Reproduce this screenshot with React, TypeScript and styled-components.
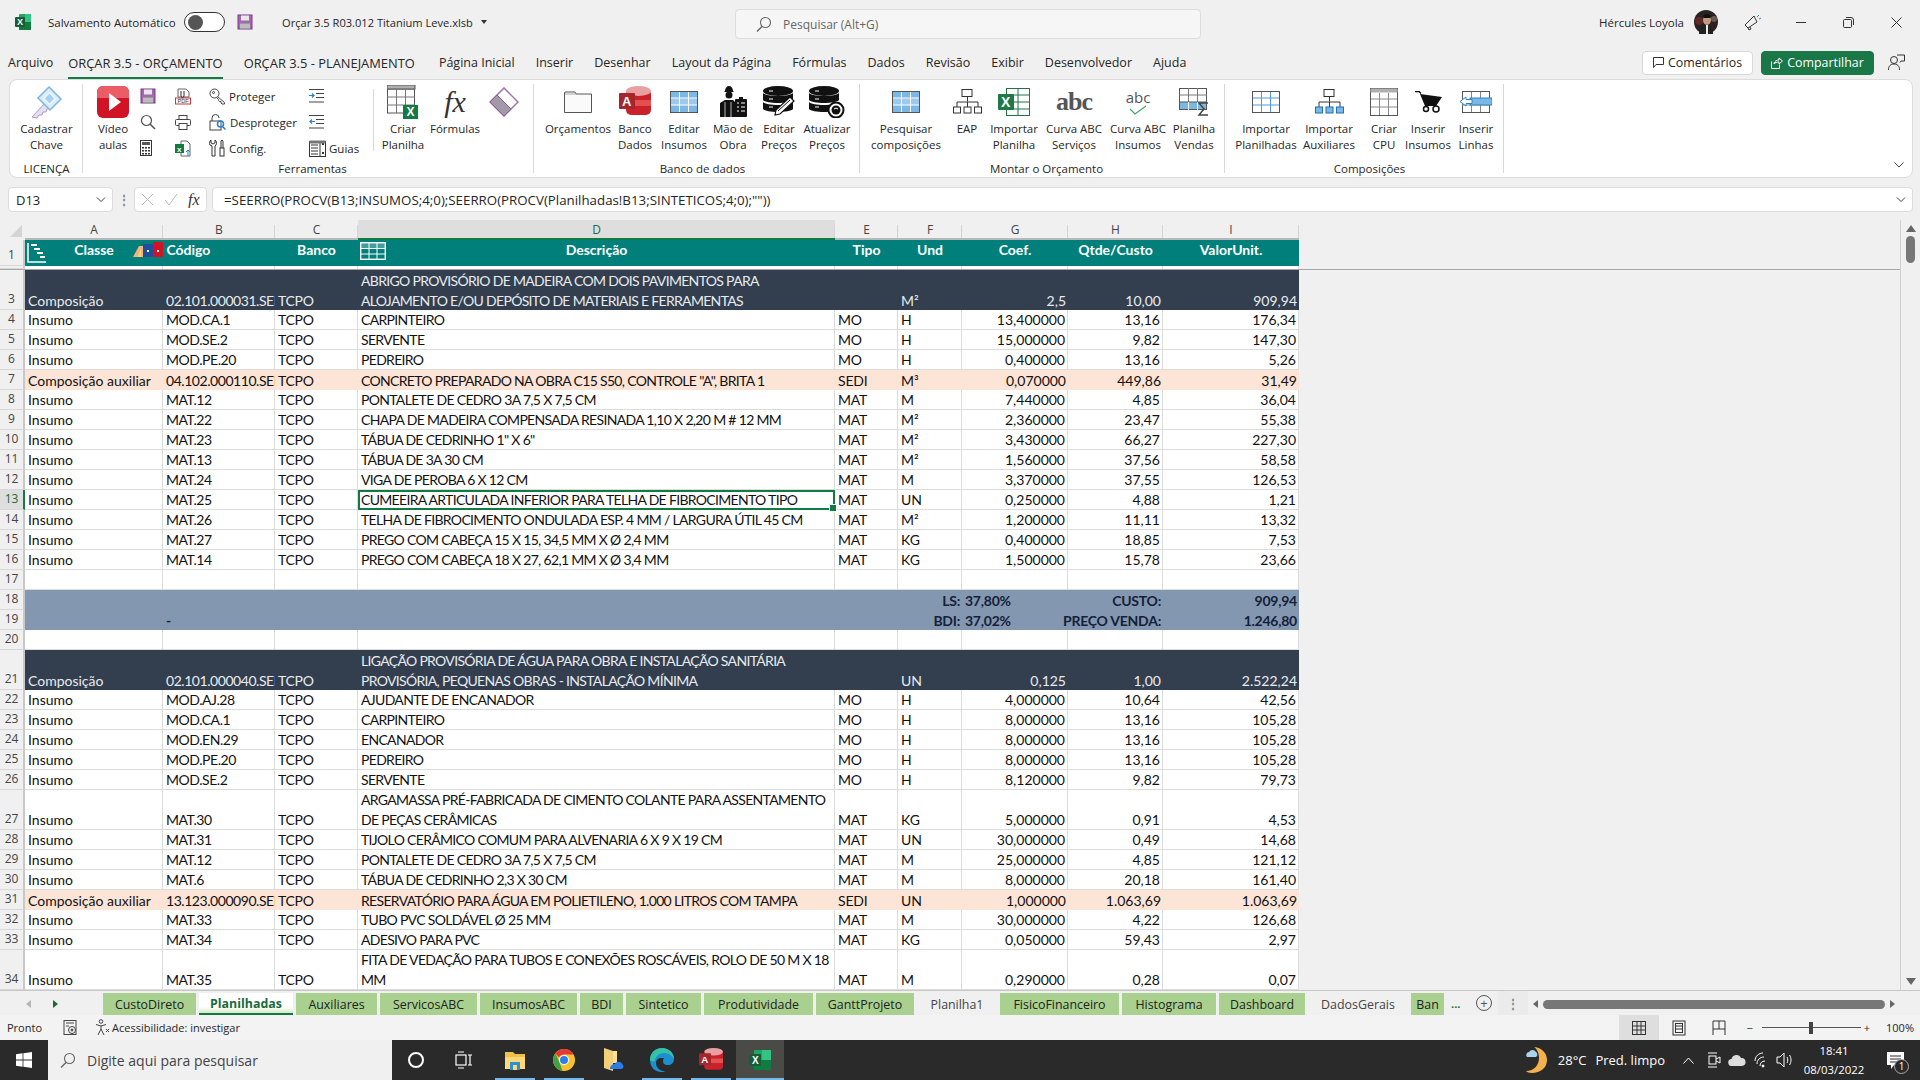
import React from 'react';
import styled, { createGlobalStyle } from 'styled-components';

const UI_FONT = '"Open Sans", "Noto Sans", sans-serif';
const CELL_FONT = 'Lato, "Liberation Sans", sans-serif';
const COLS = '25px 138px 112px 83px 477px 63px 64px 106px 95px 136px';

const GlobalStyle = createGlobalStyle`
  html, body { margin: 0; padding: 0; background: #f0f0f0; }
  * { box-sizing: border-box; }
  svg { display: block; flex: none; }
`;

const Page = styled.div`
  width: 1920px;
  height: 1080px;
  overflow: hidden;
  display: flex;
  flex-direction: column;
  background: #f0f0f0;
  font-family: ${UI_FONT};
  font-size: 12px;
  color: #262626;
`;

/* ---------- barra de titulo ---------- */
const TitleBar = styled.div`
  height: 44px;
  flex: none;
  display: flex;
  align-items: center;
  padding: 0 0 0 14px;
  position: relative;
`;
const AutoSave = styled.span`
  margin-left: 16px;
  width: 136px;
  white-space: nowrap;
  font-size: 11.5px;
`;
const Toggle = styled.span`
  width: 41px;
  height: 20px;
  border: 1px solid #333;
  border-radius: 10px;
  background: #fff;
  display: flex;
  align-items: center;
  padding-left: 3px;
  &::before {
    content: '';
    width: 15px;
    height: 15px;
    border-radius: 50%;
    background: #555;
  }
`;
const TitleSave = styled.span`
  margin-left: 12px;
`;
const FileName = styled.span`
  margin-left: 29px;
  width: 199px;
  white-space: nowrap;
  font-size: 11.1px;
`;
const Caret = styled.span`
  width: 0;
  height: 0;
  border-left: 3px solid transparent;
  border-right: 3px solid transparent;
  border-top: 4px solid #333;
`;
const SearchBox = styled.div`
  position: absolute;
  left: 735px;
  top: 9px;
  width: 466px;
  height: 30px;
  background: #f6f6f6;
  border: 1px solid #dcdcdc;
  border-radius: 4px;
  display: flex;
  align-items: center;
  gap: 11px;
  padding-left: 20px;
  color: #666;
`;
const TitleRight = styled.div`
  margin-left: auto;
  display: flex;
  align-items: center;
`;
const UserName = styled.span`
  white-space: nowrap;
  margin-right: 10px;
  font-size: 11.5px;
`;
const MegaWrap = styled.span`
  margin: 0 14px 0 26px;
`;
const WinBtn = styled.span`
  width: 48px;
  height: 32px;
  display: flex;
  align-items: center;
  justify-content: center;
`;

/* ---------- menu ---------- */
const MenuBar = styled.div`
  height: 35px;
  flex: none;
  display: flex;
  align-items: center;
  padding: 0 8px;
`;
const MenuItem = styled.span<{ $active?: boolean; $caps?: boolean; $gap?: number }>`
  height: 35px;
  margin-right: ${(p) => p.$gap ?? 21}px;
  display: flex;
  align-items: center;
  white-space: nowrap;
  font-size: ${(p) => (p.$caps ? 12.9 : 12.5)}px;
  border-bottom: 2px solid ${(p) => (p.$active ? '#107c41' : 'transparent')};
  padding-top: 4px;
`;
const MenuRight = styled.div`
  margin-left: auto;
  display: flex;
  align-items: center;
  gap: 8px;
  padding-top: 2px;
`;
const ActionBtn = styled.span<{ $primary?: boolean }>`
  height: 24px;
  width: ${(p) => (p.$primary ? 113 : 111)}px;
  border-radius: 4px;
  display: flex;
  align-items: center;
  justify-content: center;
  gap: 4px;
  background: ${(p) => (p.$primary ? '#197748' : '#fff')};
  color: ${(p) => (p.$primary ? '#fff' : '#262626')};
  border: 1px solid ${(p) => (p.$primary ? '#197748' : '#d8d8d8')};
  font-size: 12.4px;
`;
const PeopleWrap = styled.span`
  margin: 0 7px 0 6px;
`;

/* ---------- faixa de opcoes ---------- */
const Ribbon = styled.div`
  height: 99px;
  flex: none;
  margin: 0 7px 0 9px;
  background: #fff;
  border: 1px solid #dcdcdc;
  border-radius: 8px;
  display: flex;
  position: relative;
`;
const Group = styled.div<{ $w: number; $pad?: number }>`
  width: ${(p) => p.$w}px;
  flex: none;
  display: flex;
  flex-direction: column;
  padding: 3px 0 0 ${(p) => p.$pad || 0}px;
  position: relative;
  &::after {
    content: '';
    position: absolute;
    right: 0;
    top: 4px;
    bottom: 4px;
    width: 1px;
    background: #d8d8d8;
  }
`;
const GroupBody = styled.div`
  height: 78px;
  flex: none;
  display: flex;
`;
const GroupLabel = styled.div`
  text-align: center;
  font-size: 11.5px;
  line-height: 16px;
`;
const Big = styled.div<{ $w: number }>`
  width: ${(p) => p.$w}px;
  flex: none;
  display: flex;
  flex-direction: column;
  align-items: center;
  text-align: center;
  font-size: 11.5px;
  line-height: 16px;
  white-space: pre;
`;
const BigIcon = styled.div`
  height: 38px;
  display: flex;
  align-items: center;
  justify-content: center;
`;
const SmallColumn = styled.div<{ $w: number; $pad?: number }>`
  width: ${(p) => p.$w}px;
  flex: none;
  display: flex;
  flex-direction: column;
  padding-left: ${(p) => p.$pad || 0}px;
`;
const SmallItem = styled.div`
  height: 26px;
  flex: none;
  display: flex;
  align-items: center;
  gap: 3px;
  font-size: 11.5px;
  white-space: nowrap;
`;
const InnerLine = styled.div`
  width: 1px;
  height: 62px;
  margin: 6px 5px 0 5px;
  background: #d8d8d8;
  flex: none;
`;
const FxGlyph = styled.span`
  font: italic 30px 'Liberation Serif', serif;
  color: #333;
`;
const AbcBold = styled.span`
  font: bold 26px/30px 'Liberation Serif', serif;
  color: #555;
  letter-spacing: -1px;
`;
const AbcStack = styled.span`
  display: flex;
  flex-direction: column;
  align-items: center;
  font: 15px/15px ${UI_FONT};
  color: #555;
`;
const Chevron = styled.span`
  position: absolute;
  right: 8px;
  bottom: 9px;
`;

/* ---------- barra de formulas ---------- */
const FormulaBar = styled.div`
  height: 25px;
  flex: none;
  margin: 9px 7px 8px 8px;
  display: flex;
  align-items: stretch;
`;
const FieldBox = styled.div<{ $w?: number }>`
  background: #fff;
  border: 1px solid #dcdcdc;
  border-radius: 4px;
  display: flex;
  align-items: center;
  ${(p) => (p.$w ? `width: ${p.$w}px; flex: none;` : 'flex: 1;')}
`;
const NameText = styled.span`
  flex: 1;
  padding-left: 7px;
  font-size: 13px;
`;
const Dots = styled.span`
  width: 21px;
  text-align: center;
  color: #888;
  align-self: center;
  font-size: 12px;
  font-weight: bold;
`;
const FxTools = styled(FieldBox)`
  justify-content: space-between;
  padding: 0 2px 0 6px;
  margin-right: 5px;
`;
const FormulaText = styled.span`
  padding-left: 11px;
  font-size: 13.3px;
  white-space: nowrap;
  flex: 1;
`;

/* ---------- planilha ---------- */
const SheetArea = styled.div`
  height: 770px;
  flex: none;
  display: flex;
`;
const Sheet = styled.div`
  flex: 1;
  overflow: hidden;
`;
const GridRow = styled.div<{ $h: number; $freeze?: boolean }>`
  display: grid;
  grid-template-columns: ${COLS};
  height: ${(p) => p.$h}px;
  ${(p) => (p.$freeze ? 'border-bottom: 1px solid #a6a6a6;' : '')}
`;
const Corner = styled.div`
  background: #f0f0f0;
  position: relative;
  &::after {
    content: '';
    position: absolute;
    right: 3px;
    bottom: 3px;
    width: 12px;
    height: 12px;
    background: #d4d4d4;
    clip-path: polygon(100% 0, 100% 100%, 0 100%);
  }
`;
const ColHead = styled.div<{ $sel?: boolean }>`
  display: flex;
  align-items: center;
  justify-content: center;
  font-size: 12px;
  color: ${(p) => (p.$sel ? '#1a6b3c' : '#444')};
  background: ${(p) => (p.$sel ? '#dedede' : '#f0f0f0')};
  border-bottom: 2px solid ${(p) => (p.$sel ? '#107c41' : '#b8b8b8')};
  position: relative;
  &::after {
    content: '';
    position: absolute;
    right: 0;
    top: 5px;
    bottom: 0;
    width: 1px;
    background: #d4d4d4;
  }
`;
const RowHead = styled.div<{ $sel?: boolean }>`
  display: flex;
  align-items: flex-end;
  justify-content: center;
  padding-bottom: 1px;
  font: 12px/18px ${UI_FONT};
  color: ${(p) => (p.$sel ? '#1a6b3c' : '#444')};
  background: ${(p) => (p.$sel ? '#dedede' : '#f0f0f0')};
  border-right: 2px solid ${(p) => (p.$sel ? '#107c41' : '#c8c8c8')};
  border-bottom: 1px solid #d8d8d8;
`;

type Kind = 'item' | 'comp' | 'aux' | 'total' | 'blank';

const KIND_BG: Record<Kind, string> = {
  item: '#fff',
  blank: '#fff',
  comp: '#333f4f',
  aux: '#fce4d6',
  total: '#8497b0',
};

const CellBox = styled.div<{
  $kind: Kind;
  $right?: boolean;
  $sel?: boolean;
  $spill?: boolean;
  $tight?: number;
}>`
  display: flex;
  align-items: flex-end;
  justify-content: ${(p) => (p.$right ? 'flex-end' : 'flex-start')};
  padding: 0 ${(p) => (p.$right ? 2 : 0)}px 0 ${(p) => (p.$right ? 0 : 3)}px;
  font: ${(p) => (p.$kind === 'total' ? 'bold' : 'normal')} 14px/20px ${CELL_FONT};
  letter-spacing: ${(p) => (p.$kind === 'total' ? -0.25 : p.$tight || 0)}px;
  white-space: pre;
  overflow: ${(p) => (p.$spill ? 'visible' : 'hidden')};
  background: ${(p) => KIND_BG[p.$kind]};
  color: ${(p) => (p.$kind === 'comp' ? '#e8ebef' : p.$kind === 'total' ? '#14213a' : '#111')};
  ${(p) =>
    p.$kind === 'item' || p.$kind === 'blank'
      ? 'border-right: 1px solid #dcdcdc; border-bottom: 1px solid #dcdcdc;'
      : ''}
  ${(p) =>
    p.$sel
      ? `position: relative; overflow: visible; outline: 2px solid #107c41; outline-offset: -2px; z-index: 2;
         &::after { content: ''; position: absolute; right: -3px; bottom: -3px; width: 6px; height: 6px;
         background: #107c41; border: 1px solid #fff; }`
      : ''}
`;
const CellText = styled.span`
  margin-bottom: -1px;
`;
const Cell = ({ children, ...rest }: React.ComponentProps<typeof CellBox>) => (
  <CellBox {...rest}>{children ? <CellText>{children}</CellText> : null}</CellBox>
);
const TealCell = styled.div<{ $align?: string }>`
  background: #007f7b;
  color: #fff;
  display: flex;
  align-items: flex-start;
  justify-content: ${(p) => p.$align || 'center'};
  font: bold 14px/19px ${CELL_FONT};
  white-space: nowrap;
  position: relative;
`;
const TealIcon = styled.span<{ $side: 'left' | 'right' }>`
  position: absolute;
  top: 2px;
  ${(p) => (p.$side === 'left' ? 'left: 2px;' : 'right: 0;')}
`;
const SpacerCell = styled.div`
  background: #fff;
  border-right: 1px solid #dcdcdc;
`;

const VScroll = styled.div`
  width: 20px;
  flex: none;
  border-left: 1px solid #d0d0d0;
  display: flex;
  flex-direction: column;
  align-items: center;
  padding: 5px 0;
  position: relative;
`;
const VThumb = styled.div`
  width: 9px;
  height: 27px;
  background: #777;
  border-radius: 5px;
  margin-top: 4px;
`;
const VSpacer = styled.div`
  flex: 1;
`;
const ArrowUp = styled.span`
  width: 0;
  height: 0;
  border-left: 5px solid transparent;
  border-right: 5px solid transparent;
  border-bottom: 7px solid #666;
`;
const ArrowDown = styled(ArrowUp)`
  border-bottom: 0;
  border-top: 7px solid #666;
`;

/* ---------- abas ---------- */
const TabBar = styled.div`
  height: 25px;
  flex: none;
  display: flex;
  border-top: 1px solid #c8c8c8;
`;
const TabNav = styled.div`
  width: 103px;
  flex: none;
  display: flex;
  align-items: center;
  gap: 22px;
  padding: 2px 0 0 26px;
`;
const NavLeft = styled.span`
  width: 0;
  height: 0;
  border-top: 4px solid transparent;
  border-bottom: 4px solid transparent;
  border-right: 5px solid #b5b5b5;
`;
const NavRight = styled.span`
  width: 0;
  height: 0;
  border-top: 4px solid transparent;
  border-bottom: 4px solid transparent;
  border-left: 5px solid #1a6b3c;
`;
const Tabs = styled.div`
  display: flex;
  gap: 3px;
  padding-top: 2px;
`;
const Tab = styled.div<{ $w: number; $variant: 'color' | 'active' | 'plain' }>`
  width: ${(p) => p.$w}px;
  display: flex;
  align-items: center;
  justify-content: center;
  overflow: hidden;
  white-space: nowrap;
  font-size: 12.4px;
  font-weight: ${(p) => (p.$variant === 'active' ? 700 : 400)};
  color: ${(p) => (p.$variant === 'active' ? '#1a6b3c' : p.$variant === 'plain' ? '#444' : '#222')};
  background: ${(p) =>
    p.$variant === 'color'
      ? '#a9d08e'
      : p.$variant === 'active'
        ? 'linear-gradient(#fff 70%, #d5e8c8)'
        : '#f0f0f0'};
  ${(p) => (p.$variant === 'active' ? 'border-bottom: 2px solid #107c41;' : '')}
`;
const TabMore = styled.span`
  margin-left: 7px;
  width: 18px;
  color: #1a6b3c;
  font-weight: bold;
  align-self: center;
  font-size: 11px;
`;
const TabAdd = styled.span`
  width: 16px;
  height: 16px;
  margin: 0 0 0 7px;
  border: 1px solid #555;
  border-radius: 50%;
  color: #555;
  align-self: center;
  display: flex;
  align-items: center;
  justify-content: center;
  font-size: 13px;
  line-height: 1;
`;
const TabDots = styled.span`
  margin-left: 6px;
  width: 30px;
  align-self: stretch;
  display: flex;
  align-items: center;
  justify-content: center;
  color: #888;
  font-weight: bold;
  background: #ebebeb;
`;
const HScroll = styled.div`
  width: 372px;
  flex: none;
  display: flex;
  align-items: center;
  gap: 5px;
  padding: 2px 5px 0 5px;
`;
const HThumb = styled.div`
  flex: 1;
  height: 9px;
  background: #777;
  border-radius: 5px;
`;
const HArrowLeft = styled(NavLeft)`
  border-right-color: #666;
`;
const HArrowRight = styled(NavRight)`
  border-left-color: #666;
`;

/* ---------- status ---------- */
const StatusBar = styled.div`
  height: 25px;
  flex: none;
  display: flex;
  align-items: center;
  padding-left: 7px;
  font-size: 11px;
  background: #f3f3f3;
`;
const StatusItem = styled.span<{ $gap?: number }>`
  display: flex;
  align-items: center;
  gap: 2px;
  margin-left: ${(p) => p.$gap || 0}px;
`;
const StatusRight = styled.div`
  margin-left: auto;
  height: 100%;
  display: flex;
  align-items: center;
`;
const ViewBtn = styled.span<{ $on?: boolean }>`
  width: 40px;
  height: 100%;
  display: flex;
  align-items: center;
  justify-content: center;
  background: ${(p) => (p.$on ? '#dedede' : 'transparent')};
`;
const ZoomSlider = styled.span`
  width: 99px;
  height: 1px;
  background: #555;
  margin: 0 3px 0 9px;
  display: flex;
  align-items: center;
  justify-content: center;
  &::after {
    content: '';
    width: 4px;
    height: 12px;
    background: #444;
  }
`;
const ZoomText = styled.span`
  margin: 0 6px 0 16px;
`;

/* ---------- barra de tarefas ---------- */
const Taskbar = styled.div`
  height: 40px;
  flex: none;
  background: #2a2a2a;
  display: flex;
  color: #fff;
`;
const StartBtn = styled.div`
  width: 48px;
  display: flex;
  align-items: center;
  justify-content: center;
`;
const TaskSearch = styled.div`
  width: 344px;
  background: #f0f0f0;
  color: #444;
  display: flex;
  align-items: center;
  gap: 11px;
  padding-left: 12px;
  font-size: 14px;
`;
const TaskIcon = styled.div<{ $open?: boolean; $active?: boolean }>`
  width: 48px;
  flex: none;
  display: flex;
  align-items: center;
  justify-content: center;
  background: ${(p) => (p.$active ? '#4a4a47' : 'transparent')};
  position: relative;
  ${(p) =>
    p.$open
      ? `&::after { content: ''; position: absolute; bottom: 0; left: ${p.$active ? 0 : 4}px; right: ${p.$active ? 0 : 4}px; height: 2px; background: #76b9ed; }`
      : ''}
`;
const AppIcons = styled.div`
  display: flex;
  gap: 1px;
  margin-left: 3px;
`;
const Tray = styled.div`
  margin-left: auto;
  display: flex;
  align-items: center;
  font-size: 13px;
`;
const TrayText = styled.span<{ $gap: number }>`
  margin-left: ${(p) => p.$gap}px;
  white-space: nowrap;
`;
const TrayIcon = styled.span<{ $gap: number }>`
  margin-left: ${(p) => p.$gap}px;
`;
const Clock = styled.div`
  margin-left: 8px;
  width: 64px;
  text-align: center;
  font-size: 11.4px;
  line-height: 19px;
`;
const Notify = styled.span`
  margin: 0 16px 0 21px;
  position: relative;
`;
const NotifyBadge = styled.span`
  position: absolute;
  right: -5px;
  bottom: -5px;
  width: 15px;
  height: 15px;
  border-radius: 50%;
  border: 1px solid #aaa;
  background: #2a2a2a;
  font-size: 10px;
  line-height: 13px;
  text-align: center;
`;

/* ---------- icones ---------- */
const ExcelSmall = () => (
  <svg width="18" height="18" viewBox="0 0 18 18">
    <rect x="5" y="1" width="12" height="16" rx="1" fill="#21a366" />
    <rect x="11" y="1" width="6" height="8" fill="#33c481" />
    <rect x="5" y="9" width="12" height="8" fill="#107c41" />
    <rect x="1" y="4" width="10" height="10" rx="1" fill="#185c37" />
    <text x="3" y="12" fontSize="9" fontWeight="bold" fill="#fff" fontFamily="Liberation Sans">X</text>
  </svg>
);
const Floppy = ({ s = 16 }: { s?: number }) => (
  <svg width={s} height={s} viewBox="0 0 16 16">
    <rect x="1" y="1" width="14" height="14" fill="#a566b0" stroke="#7b3a8a" />
    <rect x="4" y="1.5" width="8" height="5" fill="#e8e8e8" />
    <rect x="3" y="9" width="10" height="6" fill="#9a9a9a" />
    <path d="M3 11h10M3 13h10" stroke="#ddd" />
  </svg>
);
const Magnifier = ({ s = 16, c = '#555' }: { s?: number; c?: string }) => (
  <svg width={s} height={s} viewBox="0 0 16 16" fill="none" stroke={c} strokeWidth="1.2">
    <circle cx="6.5" cy="6.5" r="5" />
    <path d="M10 10l5 5" strokeWidth="1.6" />
  </svg>
);
const MirrorSearch = () => (
  <svg width="16" height="16" viewBox="0 0 16 16" fill="none" stroke="#666" strokeWidth="1.1">
    <circle cx="9.5" cy="6.5" r="5" />
    <path d="M6 10.5l-5 5" strokeWidth="1.4" />
  </svg>
);
const KeyLarge = () => (
  <svg width="34" height="36" viewBox="0 0 34 36">
    <path d="M2 33l14-15 5 5-4 2-1 3-3 0-1 3-3 0-2 3z" fill="#e4e0f0" stroke="#a89cc8" />
    <path d="M19 3l12 12-11 11-12-12z" fill="#dcecf9" stroke="#7db5e3" strokeWidth="1.5" />
    <rect x="15.5" y="10.5" width="8" height="8" transform="rotate(45 19.5 14.5)" fill="#a7d3f2" stroke="#fff" />
  </svg>
);
const VideoIcon = () => (
  <svg width="32" height="32" viewBox="0 0 32 32">
    <rect x="0" y="0" width="32" height="32" rx="6" fill="#d01425" />
    <path d="M6 0h20a6 6 0 0 1 6 6v6H0V6a6 6 0 0 1 6-6z" fill="#ea5d66" />
    <path d="M12 7l12 9-12 9z" fill="#fff" />
  </svg>
);
const PdfClip = () => (
  <svg width="16" height="17" viewBox="0 0 16 17">
    <path d="M3 1h8l3 3v5H3z" fill="#fff" stroke="#666" />
    <rect x="0.5" y="10" width="15" height="6" fill="#fff" stroke="#d0342c" />
    <text x="2.5" y="15" fontSize="5.5" fill="#333" fontFamily="Liberation Sans">PDF</text>
    <path d="M6 3v5a1.5 1.5 0 0 0 3 0V3" fill="none" stroke="#333" />
  </svg>
);
const Printer = () => (
  <svg width="16" height="15" viewBox="0 0 16 15" fill="none" stroke="#444">
    <rect x="4" y="0.5" width="8" height="4" />
    <rect x="0.5" y="4.5" width="15" height="6" rx="1" />
    <rect x="4" y="8.5" width="8" height="6" fill="#fff" />
  </svg>
);
const Calc = () => (
  <svg width="12" height="16" viewBox="0 0 12 16">
    <rect x="0.5" y="0.5" width="11" height="15" fill="#fff" stroke="#333" />
    <rect x="2" y="2" width="8" height="3" fill="#555" />
    <path d="M2 7h2v1.5H2zM5 7h2v1.5H5zM8 7h2v1.5H8zM2 10h2v1.5H2zM5 10h2v1.5H5zM8 10h2v1.5H8zM2 13h2v1.5H2zM5 13h2v1.5H5zM8 13h2v1.5H8z" fill="#333" />
  </svg>
);
const ExcelUp = () => (
  <svg width="17" height="17" viewBox="0 0 17 17">
    <path d="M6 1h6l3 3v12H6z" fill="#fff" stroke="#666" />
    <rect x="0" y="4" width="9" height="9" fill="#107c41" />
    <text x="2" y="11.5" fontSize="8" fontWeight="bold" fill="#fff" fontFamily="Liberation Sans">x</text>
    <path d="M13 16v-6m-2 2l2-2 2 2" stroke="#2a83c9" fill="none" />
  </svg>
);
const KeySmall = () => (
  <svg width="17" height="17" viewBox="0 0 17 17" fill="none" stroke="#444">
    <circle cx="5.5" cy="5.5" r="4.5" />
    <circle cx="4.5" cy="4.5" r="1" />
    <path d="M8.5 8.5l7 6v1.500h-2.500l-1-1v-1.500h-1.500l-1-1v-1l-2-2" />
  </svg>
);
const LockSearch = () => (
  <svg width="18" height="18" viewBox="0 0 18 18" fill="none" stroke="#444">
    <rect x="1" y="8" width="11" height="9" />
    <path d="M3 8V5a3.5 3.5 0 0 1 7 0" />
    <circle cx="11.5" cy="11" r="3" stroke="#2a83c9" strokeWidth="1.5" />
    <path d="M13.5 13.5l3 3" stroke="#2a83c9" strokeWidth="1.5" />
  </svg>
);
const Tools = () => (
  <svg width="17" height="18" viewBox="0 0 17 18" fill="none" stroke="#333">
    <path d="M2 1v3l2 1 2-1V1c1.500 1 2 3 1 5L6 7v10H3V7L1 6C0 4 .5 2 2 1z" />
    <rect x="11" y="9" width="4" height="8" />
    <path d="M12 9V2l1-1 1 1v7" />
  </svg>
);
const Indent = ({ dir }: { dir: 'in' | 'out' }) => (
  <svg width="15" height="14" viewBox="0 0 15 14" fill="none">
    <path d="M0 .5h15M7 4.5h8M7 8.5h8M0 13h15" stroke="#444" />
    <path d={dir === 'in' ? 'M0 6.5h5m-2-2l2 2-2 2' : 'M6 6.5H1m2-2l-2 2 2 2'} stroke="#2a83c9" strokeWidth="1.2" />
  </svg>
);
const GuiasIcon = () => (
  <svg width="17" height="17" viewBox="0 0 17 17" fill="none" stroke="#333">
    <rect x="0.5" y="1.5" width="16" height="15" />
    <path d="M11 2v14M2 5h7M2 8h7M2 11h7M2 14h7" />
    <path d="M13 4h2M13 13h2" strokeWidth="2" />
    <rect x="0.5" y="0.5" width="16" height="3" fill="#777" stroke="none" />
  </svg>
);
const SheetExcel = () => (
  <svg width="32" height="35" viewBox="0 0 32 35">
    <rect x="0.5" y="4" width="27" height="24" fill="#fff" stroke="#555" />
    <rect x="0" y="0" width="28" height="4" fill="#b0b0b0" stroke="#555" />
    <path d="M9.5 4v24M18.5 4v24M0 12h28M0 20h28" stroke="#777" />
    <rect x="16" y="20" width="15" height="14" fill="#107c41" />
    <text x="19.5" y="31" fontSize="12" fontWeight="bold" fill="#fff" fontFamily="Liberation Sans">X</text>
  </svg>
);
const Eraser = () => (
  <svg width="30" height="30" viewBox="0 0 30 30">
    <path d="M15 1l14 14-14 14L1 15z" fill="#fff" stroke="#a070b0" strokeWidth="1.5" />
    <path d="M8 8l14 14-7 7L1 15z" fill="#a39aa8" stroke="#8a5c9a" />
  </svg>
);
const Folder = () => (
  <svg width="28" height="22" viewBox="0 0 28 22">
    <path d="M.5 2V21.500H27.500V3H12L11 1H1z" fill="#fafafa" stroke="#555" />
    <path d="M1 3h11" stroke="#aaa" />
  </svg>
);
const AccessIcon = ({ s = 32 }: { s?: number }) => (
  <svg width={s} height={s} viewBox="0 0 32 32">
    <rect x="7" y="3" width="25" height="26" rx="5" fill="#c9222b" />
    <ellipse cx="19.5" cy="5" rx="12.5" ry="5" fill="#e8a0a0" />
    <path d="M7 14h25v6H7z" fill="#e2504f" />
    <rect x="0" y="7" width="16" height="16" rx="1" fill="#a4262c" />
    <text x="3" y="20" fontSize="13" fontWeight="bold" fill="#fff" fontFamily="Liberation Sans">A</text>
  </svg>
);
const BlueTable = () => (
  <svg width="28" height="22" viewBox="0 0 28 22">
    <rect x="0.5" y="0.5" width="27" height="21" fill="#7cb8e6" stroke="#555" />
    <path d="M9.5 0v22M18.5 0v22" stroke="#fff" />
    <path d="M0 7h28M0 14h28" stroke="#fff" />
    <rect x="0.5" y="7.5" width="27" height="6.500" fill="#fff" opacity="0.25" />
    <rect x="0.5" y="0.5" width="27" height="21" fill="none" stroke="#555" />
  </svg>
);
const Worker = () => (
  <svg width="28" height="32" viewBox="0 0 28 32">
    <path d="M6 5c0-3 2-5 4-5s4 2 4 5l1 1H5z" fill="#111" />
    <circle cx="10" cy="9" r="3.5" fill="#111" />
    <path d="M1 31V17l5-3h8l3 3v14z" fill="#111" />
    <path d="M6 16v15M12 16v15" stroke="#fff" strokeWidth=".7" />
    <rect x="16" y="13" width="12" height="18" rx="1" fill="#111" />
    <rect x="20" y="11" width="4" height="3" fill="#111" />
    <path d="M18 17h2M22 17h4M18 21h2M22 21h4M18 25h2M22 25h4" stroke="#fff" />
  </svg>
);
const DbStack = () => (
  <g fill="#111">
    <ellipse cx="15" cy="5" rx="15" ry="5" />
    <path d="M0 7c3 4 27 4 30 0v7c-3 4-27 4-30 0zM0 16c3 4 27 4 30 0v7c-3 4-27 4-30 0z" />
    <path d="M6 5h4M6 13h4M6 21h4" stroke="#fff" />
  </g>
);
const DbPencil = () => (
  <svg width="32" height="32" viewBox="0 0 32 32">
    <DbStack />
    <path d="M12 29l1-5 14-13 4 4-14 13z" fill="#fff" stroke="#111" strokeWidth="1.2" />
    <path d="M15 25l12-11" stroke="#111" />
  </svg>
);
const DbGear = () => (
  <svg width="36" height="32" viewBox="0 0 36 32">
    <DbStack />
    <circle cx="27" cy="24" r="7.5" fill="#fff" stroke="#111" strokeWidth="2" />
    <circle cx="27" cy="24" r="4.5" fill="#111" />
    <path d="M25 23a3 3 0 0 1 4 0" stroke="#fff" fill="none" />
  </svg>
);
const OrgChart = ({ fill = 'none', stroke = '#333' }: { fill?: string; stroke?: string }) => (
  <svg width="29" height="26" viewBox="0 0 29 26" fill="none">
    <rect x="9" y="0.5" width="10" height="7" stroke="#333" />
    <path d="M14.5 7.5v5M4 18v-5h21v5M14.5 13v5" stroke="#333" />
    <rect x="0.5" y="18" width="7" height="6" fill={fill} stroke={stroke} />
    <rect x="11" y="18" width="7" height="6" fill={fill} stroke={stroke} />
    <rect x="21.5" y="18" width="7" height="6" fill={fill} stroke={stroke} />
  </svg>
);
const ExcelGrid = () => (
  <svg width="32" height="28" viewBox="0 0 32 28">
    <rect x="8.5" y="0.5" width="23" height="27" fill="#fff" stroke="#217346" />
    <path d="M20 0v28M9 7h22M9 14h22M9 21h22" stroke="#217346" />
    <rect x="0" y="6" width="16" height="16" rx="1" fill="#1d7a46" />
    <text x="3" y="19" fontSize="14" fontWeight="bold" fill="#fff" fontFamily="Liberation Sans">X</text>
  </svg>
);
const GreenCheck = () => (
  <svg width="18" height="10" viewBox="0 0 18 10" fill="none" stroke="#3aa76d" strokeWidth="1.2">
    <path d="M1 4l5 5L17 1" />
  </svg>
);
const TableSum = () => (
  <svg width="30" height="28" viewBox="0 0 30 28">
    <rect x="0.5" y="0.5" width="27" height="21" fill="#fff" stroke="#555" />
    <path d="M9.5 0v22M18.5 0v22M0 7h28" stroke="#777" />
    <rect x="0.5" y="14" width="27" height="7.5" fill="#7cb8e6" stroke="#555" />
    <path d="M9.5 14v8M18.5 14v8" stroke="#fff" />
    <path d="M29 15H20l5 6-5 6h9" fill="none" stroke="#444" strokeWidth="1.5" />
  </svg>
);
const GridOutlineBlue = () => (
  <svg width="28" height="22" viewBox="0 0 28 22">
    <rect x="0.5" y="0.5" width="27" height="21" fill="#fff" stroke="#555" />
    <path d="M9.5 1v20M18.5 1v20M1 7h26M1 14h26" stroke="#4f9ae0" />
  </svg>
);
const CpuSheet = () => (
  <svg width="28" height="28" viewBox="0 0 28 28">
    <rect x="0.5" y="0.5" width="27" height="27" fill="#fff" stroke="#555" />
    <rect x="0.5" y="0.5" width="27" height="4" fill="#b0b0b0" />
    <path d="M9.5 5v22M18.5 5v22M1 11h26M1 19h26" stroke="#888" />
  </svg>
);
const Cart = () => (
  <svg width="27" height="22" viewBox="0 0 27 22">
    <path d="M0 .5h4l2 2" stroke="#111" strokeWidth="1.5" fill="none" />
    <path d="M5 3l22 3-6 9H10z" fill="#111" />
    <circle cx="11" cy="18" r="2.5" fill="#fff" stroke="#111" strokeWidth="1.5" />
    <circle cx="21" cy="18" r="3" fill="#fff" stroke="#111" strokeWidth="1.5" />
  </svg>
);
const InsertRow = () => (
  <svg width="32" height="22" viewBox="0 0 32 22">
    <rect x="2.5" y="0.5" width="27" height="21" fill="#fff" stroke="#555" />
    <path d="M11.5 1v20M20.5 1v20M2 14h28" stroke="#888" />
    <rect x="10" y="7" width="22" height="7" fill="#7cb8e6" stroke="#2a83c9" />
    <path d="M12 8.500H6V6L0 10.500 6 15v-2.500h6z" fill="#fff" stroke="#2a83c9" />
  </svg>
);
const StairIcon = () => (
  <svg width="20" height="22" viewBox="0 0 20 22" fill="none" stroke="#fff">
    <path d="M1 1v19h18" strokeWidth="1.5" />
    <path d="M4 3h6M7 7h6M10 11h6M13 15h5" strokeWidth="2" />
  </svg>
);
const HouseChart = () => (
  <svg width="30" height="18" viewBox="0 0 30 18">
    <path d="M0 15L6 4l4 0v11z" fill="#f4b183" />
    <path d="M5 15l3-9v9z" fill="#ffd966" />
    <rect x="10" y="2" width="10" height="13" fill="#1f4e9c" />
    <rect x="20" y="0" width="10" height="15" fill="#d01425" />
    <rect x="14" y="8" width="2" height="2" fill="#fff" />
    <rect x="24" y="8" width="2" height="2" fill="#fff" />
  </svg>
);
const WhiteTable = () => (
  <svg width="26" height="18" viewBox="0 0 26 18" fill="none" stroke="#fff">
    <rect x="0.7" y="0.7" width="24.6" height="16.6" strokeWidth="1.4" />
    <path d="M9 1v16M17 1v16M1 6.500h24M1 12h24" />
    <rect x="1" y="1" width="24" height="5" fill="#fff" opacity=".25" stroke="none" />
  </svg>
);
const Avatar = () => (
  <svg width="24" height="24" viewBox="0 0 24 24">
    <circle cx="12" cy="12" r="12" fill="#2a2222" />
    <circle cx="5" cy="11" r="4" fill="#7a2a2a" opacity=".7" />
    <circle cx="20" cy="9" r="3" fill="#6a5a50" />
    <ellipse cx="13" cy="10" rx="4" ry="5" fill="#c29a80" />
    <path d="M9 7c1-4 7-4 8 0l-1 1H10z" fill="#111" />
    <path d="M5 24c0-6 3-9 8-9s6 3 6 9z" fill="#222" />
    <path d="M12 15h2v9h-2z" fill="#eee" />
  </svg>
);
const Megaphone = () => (
  <svg width="18" height="18" viewBox="0 0 18 18" fill="none" stroke="#333">
    <path d="M1 12l9-9 3 6-9 6z" />
    <path d="M4 15l1 2 2-1-1-2" />
    <path d="M13 4l2-2M15 6l2-1" stroke="#2a83c9" />
  </svg>
);
const Comment = ({ c = '#333' }: { c?: string }) => (
  <svg width="11" height="12" viewBox="0 0 11 12" fill="none" stroke={c}>
    <path d="M.5.5h10v7H3l-2.500 3z" />
  </svg>
);
const ShareIco = () => (
  <svg width="12" height="12" viewBox="0 0 12 12" fill="none" stroke="#fff">
    <path d="M.5 4.500v7h8v-4M3 7c0-3 3-4 5-4V1l3.500 3L8 7V5C6 5 4 5.500 3 7z" />
  </svg>
);
const People = () => (
  <svg width="17" height="17" viewBox="0 0 17 17" fill="none" stroke="#333">
    <circle cx="6" cy="6" r="3.5" />
    <path d="M.5 16c0-4 2-6 5.500-6s5.500 2 5.500 6" />
    <path d="M9 1h7.500v6H13l-1 1.500" />
  </svg>
);
const ChevronDown = ({ c = '#444' }: { c?: string }) => (
  <svg width="10" height="6" viewBox="0 0 10 6" fill="none" stroke={c}>
    <path d="M.5.5L5 5 9.500.5" />
  </svg>
);
const WindowsLogo = () => (
  <svg width="16" height="16" viewBox="0 0 16 16" fill="#fff">
    <path d="M0 2.200l6.600-.9v6.300H0zM7.400 1.200L16 0v7.600H7.400zM0 8.400h6.600v6.300L0 13.800zM7.400 8.400H16V16l-8.600-1.200z" />
  </svg>
);
const Explorer = () => (
  <svg width="22" height="22" viewBox="0 0 22 22">
    <path d="M1 3h8l2 2h10v15H1z" fill="#f0c14b" />
    <rect x="1" y="8" width="20" height="12" fill="#ffd978" />
    <rect x="6" y="13" width="10" height="8" fill="#2d8fd5" />
    <rect x="9" y="16" width="4" height="5" fill="#ffd978" />
  </svg>
);
const Chrome = () => (
  <svg width="22" height="22" viewBox="0 0 22 22">
    <circle cx="11" cy="11" r="11" fill="#fbc02d" />
    <path d="M11 0a11 11 0 0 1 9.500 5.500H11A5.500 5.500 0 0 0 6 8.500L2.300 4.300A11 11 0 0 1 11 0z" fill="#e53935" />
    <path d="M0 11A11 11 0 0 1 2.300 4.300L6.500 13.500 9.500 21.800A11 11 0 0 1 0 11z" fill="#43a047" />
    <circle cx="11" cy="11" r="5" fill="#fff" />
    <circle cx="11" cy="11" r="4" fill="#2b7de9" />
  </svg>
);
const DocFolder = () => (
  <svg width="22" height="26" viewBox="0 0 22 26">
    <path d="M2 1l9 3v20l-9-3z" fill="#f3cf7a" />
    <path d="M11 4h4v12h-4z" fill="#ffe19a" />
    <path d="M8 22c0-3 2-5 5-5 1-3 6-3 7 0 2 1 2 5-1 5z" fill="#2b7de9" />
  </svg>
);
const Edge = () => (
  <svg width="24" height="24" viewBox="0 0 24 24">
    <path d="M12 0c7 0 12 5 12 11 0 4-3 6-6 6-4 0-5-2-5-4 0-1 .5-2 1-2.500C10 9 6 11 6 15c0 5 5 9 10 8-2 1-3 1-5 1C5 24 0 19 0 12 0 5 5 0 12 0z" fill="#1b8fd0" />
    <path d="M0 12C0 5 5 0 12 0c7 0 12 5 12 11-3-7-13-8-17-3-1 1-2 3-2 5C3 14 1 13 0 12z" fill="#35c1a8" />
  </svg>
);
const ExcelTask = () => (
  <svg width="24" height="24" viewBox="0 0 24 24">
    <rect x="6" y="2" width="17" height="20" rx="1" fill="#21a366" />
    <rect x="14" y="2" width="9" height="10" fill="#33c481" />
    <rect x="6" y="12" width="17" height="10" fill="#107c41" />
    <rect x="1" y="6" width="12" height="12" rx="1" fill="#185c37" />
    <text x="4" y="15.5" fontSize="10" fontWeight="bold" fill="#fff" fontFamily="Liberation Sans">X</text>
  </svg>
);
const TaskView = () => (
  <svg width="18" height="18" viewBox="0 0 18 18" fill="none" stroke="#fff" strokeWidth="1.2">
    <rect x="1" y="4" width="10" height="10" />
    <path d="M13 4h4M15 4v10M13 14h4M3 1h6M3 17h6" />
  </svg>
);
const Moon = () => (
  <svg width="23" height="30" viewBox="0 0 23 30">
    <path d="M9 2C18 3 22 9 22 15C22 23 15 28 7 28C4 28 2 27 1 26C9 26 14 20 14 13C14 8 12 4 9 2z" fill="#f5b14c" />
    <path d="M2 12a3 3 0 0 1 2-5 4 4 0 0 1 7 0 3 3 0 0 1 0 5z" fill="#a8d4ee" />
  </svg>
);
const TrayCam = () => (
  <svg width="16" height="20" viewBox="0 0 16 20" fill="none" stroke="#fff">
    <rect x="3" y="6" width="7" height="8" />
    <path d="M10 9l4-2v6l-4-2M2 3h9M2 17h9" />
  </svg>
);
const Cloud = () => (
  <svg width="18" height="12" viewBox="0 0 18 12" fill="#ddd">
    <path d="M4 12a3.500 3.500 0 0 1-.5-7A5 5 0 0 1 13 4a4 4 0 0 1 1 8z" />
  </svg>
);
const Wifi = () => (
  <svg width="16" height="16" viewBox="0 0 16 16" fill="none" stroke="#fff">
    <path d="M1 9c0-5 4-8 8-8M3 12c0-4 3-7 7-7M6 14c0-3 2-5 5-5" />
    <circle cx="9" cy="14" r="1" fill="#fff" />
  </svg>
);
const Speaker = () => (
  <svg width="18" height="16" viewBox="0 0 18 16" fill="none" stroke="#fff">
    <path d="M1 5h3l4-4v14l-4-4H1z" />
    <path d="M11 5c1 2 1 4 0 6M13.500 3c2 3 2 7 0 10" />
  </svg>
);
const NotifyIcon = () => (
  <svg width="17" height="17" viewBox="0 0 17 17" fill="#fff">
    <path d="M0 0h17v13H7l-3 4v-4H0z" />
    <path d="M3 4h11M3 7h11M3 10h7" stroke="#2a2a2a" />
  </svg>
);
const DocStatus = () => (
  <svg width="15" height="16" viewBox="0 0 15 16" fill="none" stroke="#444">
    <rect x="1" y="0.5" width="12" height="14" />
    <path d="M3 3h8M3 6h3" />
    <circle cx="9" cy="10" r="3.5" fill="#f3f3f3" />
    <circle cx="9" cy="10" r="1" fill="#444" />
  </svg>
);
const Accessibility = () => (
  <svg width="15" height="17" viewBox="0 0 15 17" fill="none" stroke="#444">
    <circle cx="6" cy="2.5" r="1.8" />
    <path d="M1 5.500l5 1.500 5-1.500M6 7v3l-3 6M6 10l3 6M11 10l3 3M14 10l-3 3" />
  </svg>
);
const ViewNormal = () => (
  <svg width="16" height="16" viewBox="0 0 16 16" fill="none" stroke="#333">
    <rect x="1.5" y="1.5" width="13" height="13" />
    <path d="M6 2v12M10 2v12M2 6h12M2 10h12" />
  </svg>
);
const ViewLayout = () => (
  <svg width="14" height="16" viewBox="0 0 14 16" fill="none" stroke="#333">
    <rect x="1" y="1" width="12" height="14" />
    <rect x="3.5" y="3.5" width="7" height="9" />
    <path d="M4 6h6M4 9h6" />
  </svg>
);
const ViewBreak = () => (
  <svg width="14" height="16" viewBox="0 0 14 16" fill="none" stroke="#333">
    <path d="M1 15V1h12v14" />
    <path d="M7 1v8H1M7 9h6" />
  </svg>
);

/* ---------- dados ---------- */
type Row = {
  n: number;
  kind: Kind;
  h?: number;
  a?: string;
  b?: string;
  d?: string;
  e?: string;
  f?: string;
  g?: string;
  h2?: string;
  i?: string;
};

const it = (n: number, b: string, d: string, e: string, f: string, g: string, h2: string, i: string, h?: number): Row => ({
  n, kind: 'item', a: 'Insumo', b, d, e, f, g, h2, i, h,
});

const ROWS: Row[] = [
  { n: 3, kind: 'comp', h: 40, a: 'Composição', b: '02.101.000031.SER', d: 'ABRIGO PROVISÓRIO DE MADEIRA COM DOIS PAVIMENTOS PARA\nALOJAMENTO E/OU DEPÓSITO DE MATERIAIS E FERRAMENTAS', f: 'M²', g: '2,5', h2: '10,00', i: '909,94' },
  it(4, 'MOD.CA.1', 'CARPINTEIRO', 'MO', 'H', '13,400000', '13,16', '176,34'),
  it(5, 'MOD.SE.2', 'SERVENTE', 'MO', 'H', '15,000000', '9,82', '147,30'),
  it(6, 'MOD.PE.20', 'PEDREIRO', 'MO', 'H', '0,400000', '13,16', '5,26'),
  { n: 7, kind: 'aux', a: 'Composição auxiliar', b: '04.102.000110.SER', d: 'CONCRETO PREPARADO NA OBRA C15 S50, CONTROLE "A", BRITA 1', e: 'SEDI', f: 'M³', g: '0,070000', h2: '449,86', i: '31,49' },
  it(8, 'MAT.12', 'PONTALETE DE CEDRO 3A 7,5 X 7,5 CM', 'MAT', 'M', '7,440000', '4,85', '36,04'),
  it(9, 'MAT.22', 'CHAPA DE MADEIRA COMPENSADA RESINADA 1,10 X 2,20 M # 12 MM', 'MAT', 'M²', '2,360000', '23,47', '55,38'),
  it(10, 'MAT.23', 'TÁBUA DE CEDRINHO 1" X 6"', 'MAT', 'M²', '3,430000', '66,27', '227,30'),
  it(11, 'MAT.13', 'TÁBUA DE 3A 30 CM', 'MAT', 'M²', '1,560000', '37,56', '58,58'),
  it(12, 'MAT.24', 'VIGA DE PEROBA 6 X 12 CM', 'MAT', 'M', '3,370000', '37,55', '126,53'),
  it(13, 'MAT.25', 'CUMEEIRA ARTICULADA INFERIOR PARA TELHA DE FIBROCIMENTO TIPO', 'MAT', 'UN', '0,250000', '4,88', '1,21'),
  it(14, 'MAT.26', 'TELHA DE FIBROCIMENTO ONDULADA ESP. 4 MM / LARGURA ÚTIL 45 CM', 'MAT', 'M²', '1,200000', '11,11', '13,32'),
  it(15, 'MAT.27', 'PREGO COM CABEÇA 15 X 15, 34,5 MM X Ø 2,4 MM', 'MAT', 'KG', '0,400000', '18,85', '7,53'),
  it(16, 'MAT.14', 'PREGO COM CABEÇA 18 X 27, 62,1 MM X Ø 3,4 MM', 'MAT', 'KG', '1,500000', '15,78', '23,66'),
  { n: 17, kind: 'blank' },
  { n: 18, kind: 'total', f: 'LS:', g: '37,80%', h2: 'CUSTO:', i: '909,94' },
  { n: 19, kind: 'total', b: '-', f: 'BDI:', g: '37,02%', h2: 'PREÇO VENDA:', i: '1.246,80' },
  { n: 20, kind: 'blank' },
  { n: 21, kind: 'comp', h: 40, a: 'Composição', b: '02.101.000040.SER', d: 'LIGAÇÃO PROVISÓRIA DE ÁGUA PARA OBRA E INSTALAÇÃO SANITÁRIA\nPROVISÓRIA, PEQUENAS OBRAS - INSTALAÇÃO MÍNIMA', f: 'UN', g: '0,125', h2: '1,00', i: '2.522,24' },
  it(22, 'MOD.AJ.28', 'AJUDANTE DE ENCANADOR', 'MO', 'H', '4,000000', '10,64', '42,56'),
  it(23, 'MOD.CA.1', 'CARPINTEIRO', 'MO', 'H', '8,000000', '13,16', '105,28'),
  it(24, 'MOD.EN.29', 'ENCANADOR', 'MO', 'H', '8,000000', '13,16', '105,28'),
  it(25, 'MOD.PE.20', 'PEDREIRO', 'MO', 'H', '8,000000', '13,16', '105,28'),
  it(26, 'MOD.SE.2', 'SERVENTE', 'MO', 'H', '8,120000', '9,82', '79,73'),
  it(27, 'MAT.30', 'ARGAMASSA PRÉ-FABRICADA DE CIMENTO COLANTE PARA ASSENTAMENTO\nDE PEÇAS CERÂMICAS', 'MAT', 'KG', '5,000000', '0,91', '4,53', 40),
  it(28, 'MAT.31', 'TIJOLO CERÂMICO COMUM PARA ALVENARIA 6 X 9 X 19 CM', 'MAT', 'UN', '30,000000', '0,49', '14,68'),
  it(29, 'MAT.12', 'PONTALETE DE CEDRO 3A 7,5 X 7,5 CM', 'MAT', 'M', '25,000000', '4,85', '121,12'),
  it(30, 'MAT.6', 'TÁBUA DE CEDRINHO 2,3 X 30 CM', 'MAT', 'M', '8,000000', '20,18', '161,40'),
  { n: 31, kind: 'aux', a: 'Composição auxiliar', b: '13.123.000090.SER', d: 'RESERVATÓRIO PARA ÁGUA EM POLIETILENO, 1.000 LITROS COM TAMPA', e: 'SEDI', f: 'UN', g: '1,000000', h2: '1.063,69', i: '1.063,69' },
  it(32, 'MAT.33', 'TUBO PVC SOLDÁVEL Ø 25 MM', 'MAT', 'M', '30,000000', '4,22', '126,68'),
  it(33, 'MAT.34', 'ADESIVO PARA PVC', 'MAT', 'KG', '0,050000', '59,43', '2,97'),
  it(34, 'MAT.35', 'FITA DE VEDAÇÃO PARA TUBOS E CONEXÕES ROSCÁVEIS, ROLO DE 50 M X 18\nMM', 'MAT', 'M', '0,290000', '0,28', '0,07', 40),
];

const TABS: { label: string; w: number; variant: 'color' | 'active' | 'plain' }[] = [
  { label: 'CustoDireto', w: 93, variant: 'color' },
  { label: 'Planilhadas', w: 94, variant: 'active' },
  { label: 'Auxiliares', w: 81, variant: 'color' },
  { label: 'ServicosABC', w: 97, variant: 'color' },
  { label: 'InsumosABC', w: 97, variant: 'color' },
  { label: 'BDI', w: 43, variant: 'color' },
  { label: 'Sintetico', w: 75, variant: 'color' },
  { label: 'Produtividade', w: 109, variant: 'color' },
  { label: 'GanttProjeto', w: 98, variant: 'color' },
  { label: 'Planilha1', w: 80, variant: 'plain' },
  { label: 'FisicoFinanceiro', w: 119, variant: 'color' },
  { label: 'Histograma', w: 94, variant: 'color' },
  { label: 'Dashboard', w: 86, variant: 'color' },
  { label: 'DadosGerais', w: 100, variant: 'plain' },
  { label: 'Ban', w: 33, variant: 'color' },
];

const HEADERS = ['A', 'B', 'C', 'D', 'E', 'F', 'G', 'H', 'I'];

const SheetRow = ({ r }: { r: Row }) => {
  const isTotal = r.kind === 'total';
  const sel = r.n === 13;
  return (
    <GridRow $h={r.h || 20}>
      <RowHead $sel={sel}>{r.n}</RowHead>
      <Cell $kind={r.kind}>{r.a}</Cell>
      <Cell $kind={r.kind} $tight={-0.45}>{r.b}</Cell>
      <Cell $kind={r.kind} $tight={-0.3}>{r.kind === 'blank' || isTotal ? '' : 'TCPO'}</Cell>
      <Cell $kind={r.kind} $sel={sel} $tight={-0.68}>{r.d}</Cell>
      <Cell $kind={r.kind} $tight={-0.2}>{r.e}</Cell>
      <Cell $kind={r.kind} $right={isTotal}>{r.f}</Cell>
      <Cell $kind={r.kind} $right={!isTotal}>{r.g}</Cell>
      <Cell $kind={r.kind} $right $spill={isTotal}>{r.h2}</Cell>
      <Cell $kind={r.kind} $right>{r.i}</Cell>
    </GridRow>
  );
};

export default function App() {
  return (
    <>
      <GlobalStyle />
      <Page>
        <TitleBar>
          <ExcelSmall />
          <AutoSave>Salvamento Automático</AutoSave>
          <Toggle />
          <TitleSave>
            <Floppy />
          </TitleSave>
          <FileName>Orçar 3.5 R03.012 Titanium Leve.xlsb</FileName>
          <Caret />
          <SearchBox>
            <MirrorSearch />
            Pesquisar (Alt+G)
          </SearchBox>
          <TitleRight>
            <UserName>Hércules Loyola</UserName>
            <Avatar />
            <MegaWrap>
              <Megaphone />
            </MegaWrap>
            <WinBtn>
              <svg width="11" height="11" viewBox="0 0 11 11" stroke="#333"><path d="M1 5.5h10" /></svg>
            </WinBtn>
            <WinBtn>
              <svg width="11" height="11" viewBox="0 0 11 11" fill="none" stroke="#333"><rect x="0.5" y="2.5" width="8" height="8" rx="1" /><path d="M3 .5h5a2.500 2.500 0 0 1 2.500 2.500v5" /></svg>
            </WinBtn>
            <WinBtn>
              <svg width="11" height="11" viewBox="0 0 11 11" stroke="#333"><path d="M.5.5l10 10M10.500.5l-10 10" /></svg>
            </WinBtn>
          </TitleRight>
        </TitleBar>

        <MenuBar>
          <MenuItem $gap={15}>Arquivo</MenuItem>
          <MenuItem $active $caps>ORÇAR 3.5 - ORÇAMENTO</MenuItem>
          <MenuItem $caps $gap={24}>ORÇAR 3.5 - PLANEJAMENTO</MenuItem>
          <MenuItem>Página Inicial</MenuItem>
          <MenuItem>Inserir</MenuItem>
          <MenuItem>Desenhar</MenuItem>
          <MenuItem>Layout da Página</MenuItem>
          <MenuItem>Fórmulas</MenuItem>
          <MenuItem>Dados</MenuItem>
          <MenuItem>Revisão</MenuItem>
          <MenuItem>Exibir</MenuItem>
          <MenuItem>Desenvolvedor</MenuItem>
          <MenuItem>Ajuda</MenuItem>
          <MenuRight>
            <ActionBtn>
              <Comment />
              Comentários
            </ActionBtn>
            <ActionBtn $primary>
              <ShareIco />
              Compartilhar
            </ActionBtn>
            <PeopleWrap>
              <People />
            </PeopleWrap>
          </MenuRight>
        </MenuBar>

        <Ribbon>
          <Group $w={73}>
            <GroupBody>
              <Big $w={73}>
                <BigIcon><KeyLarge /></BigIcon>
                {'Cadastrar\nChave'}
              </Big>
            </GroupBody>
            <GroupLabel>LICENÇA</GroupLabel>
          </Group>
          <Group $w={451} $pad={8}>
            <GroupBody>
              <Big $w={44}>
                <BigIcon><VideoIcon /></BigIcon>
                {'Vídeo\naulas'}
              </Big>
              <SmallColumn $w={40} $pad={5}>
                <SmallItem><Floppy /></SmallItem>
                <SmallItem><Magnifier /></SmallItem>
                <SmallItem><Calc /></SmallItem>
              </SmallColumn>
              <SmallColumn $w={34}>
                <SmallItem><PdfClip /></SmallItem>
                <SmallItem><Printer /></SmallItem>
                <SmallItem><ExcelUp /></SmallItem>
              </SmallColumn>
              <SmallColumn $w={100}>
                <SmallItem><KeySmall />Proteger</SmallItem>
                <SmallItem><LockSearch />Desproteger</SmallItem>
                <SmallItem><Tools />Config.</SmallItem>
              </SmallColumn>
              <SmallColumn $w={59}>
                <SmallItem><Indent dir="in" /></SmallItem>
                <SmallItem><Indent dir="out" /></SmallItem>
                <SmallItem><GuiasIcon />Guias</SmallItem>
              </SmallColumn>
              <InnerLine />
              <Big $w={48}>
                <BigIcon><SheetExcel /></BigIcon>
                {'Criar\nPlanilha'}
              </Big>
              <Big $w={56}>
                <BigIcon><FxGlyph>fx</FxGlyph></BigIcon>
                Fórmulas
              </Big>
              <Big $w={42}>
                <BigIcon><Eraser /></BigIcon>
              </Big>
            </GroupBody>
            <GroupLabel>Ferramentas</GroupLabel>
          </Group>
          <Group $w={326} $pad={11}>
            <GroupBody>
              <Big $w={66}><BigIcon><Folder /></BigIcon>Orçamentos</Big>
              <Big $w={48}><BigIcon><AccessIcon /></BigIcon>{'Banco\nDados'}</Big>
              <Big $w={50}><BigIcon><BlueTable /></BigIcon>{'Editar\nInsumos'}</Big>
              <Big $w={48}><BigIcon><Worker /></BigIcon>{'Mão de\nObra'}</Big>
              <Big $w={44}><BigIcon><DbPencil /></BigIcon>{'Editar\nPreços'}</Big>
              <Big $w={52}><BigIcon><DbGear /></BigIcon>{'Atualizar\nPreços'}</Big>
            </GroupBody>
            <GroupLabel>Banco de dados</GroupLabel>
          </Group>
          <Group $w={365} $pad={8}>
            <GroupBody>
              <Big $w={76}><BigIcon><BlueTable /></BigIcon>{'Pesquisar\ncomposições'}</Big>
              <Big $w={46}><BigIcon><OrgChart /></BigIcon>EAP</Big>
              <Big $w={48}><BigIcon><ExcelGrid /></BigIcon>{'Importar\nPlanilha'}</Big>
              <Big $w={72}><BigIcon><AbcBold>abc</AbcBold></BigIcon>{'Curva ABC\nServiços'}</Big>
              <Big $w={56}>
                <BigIcon>
                  <AbcStack>abc<GreenCheck /></AbcStack>
                </BigIcon>
                {'Curva ABC\nInsumos'}
              </Big>
              <Big $w={56}><BigIcon><TableSum /></BigIcon>{'Planilha\nVendas'}</Big>
            </GroupBody>
            <GroupLabel>Montar o Orçamento</GroupLabel>
          </Group>
          <Group $w={279} $pad={10}>
            <GroupBody>
              <Big $w={62}><BigIcon><GridOutlineBlue /></BigIcon>{'Importar\nPlanilhadas'}</Big>
              <Big $w={64}><BigIcon><OrgChart fill="#7cb8e6" stroke="#1f6fb5" /></BigIcon>{'Importar\nAuxiliares'}</Big>
              <Big $w={46}><BigIcon><CpuSheet /></BigIcon>{'Criar\nCPU'}</Big>
              <Big $w={42}><BigIcon><Cart /></BigIcon>{'Inserir\nInsumos'}</Big>
              <Big $w={54}><BigIcon><InsertRow /></BigIcon>{'Inserir\nLinhas'}</Big>
            </GroupBody>
            <GroupLabel>Composições</GroupLabel>
          </Group>
          <Chevron><ChevronDown /></Chevron>
        </Ribbon>

        <FormulaBar>
          <FieldBox $w={105}>
            <NameText>D13</NameText>
            <svg width="20" height="6" viewBox="0 0 20 6" fill="none" stroke="#444"><path d="M5 .5L9 4.500 13 .5" /></svg>
          </FieldBox>
          <Dots>⋮</Dots>
          <FxTools $w={73}>
            <svg width="13" height="13" viewBox="0 0 13 13" stroke="#bbb"><path d="M1 1l11 11M12 1L1 12" /></svg>
            <svg width="14" height="13" viewBox="0 0 14 13" fill="none" stroke="#bbb"><path d="M1 7l4 5 8-11" /></svg>
            <svg width="16" height="16" viewBox="0 0 16 16">
              <text x="0" y="13" fontSize="16" fontStyle="italic" fill="#333" fontFamily="Liberation Serif">fx</text>
            </svg>
          </FxTools>
          <FieldBox>
            <FormulaText>=SEERRO(PROCV(B13;INSUMOS;4;0);SEERRO(PROCV(Planilhadas!B13;SINTETICOS;4;0);""))</FormulaText>
            <svg width="20" height="6" viewBox="0 0 20 6" fill="none" stroke="#444"><path d="M5 .5L9 4.500 13 .5" /></svg>
          </FieldBox>
        </FormulaBar>

        <SheetArea>
          <Sheet>
            <GridRow $h={20}>
              <Corner />
              {HEADERS.map((c) => (
                <ColHead key={c} $sel={c === 'D'}>{c}</ColHead>
              ))}
            </GridRow>
            <GridRow $h={26}>
              <RowHead>1</RowHead>
              <TealCell>
                <TealIcon $side="left"><StairIcon /></TealIcon>
                Classe
                <TealIcon $side="right"><HouseChart /></TealIcon>
              </TealCell>
              <TealCell $align="flex-start">&nbsp;Código</TealCell>
              <TealCell>Banco</TealCell>
              <TealCell>
                <TealIcon $side="left"><WhiteTable /></TealIcon>
                Descrição
              </TealCell>
              <TealCell>Tipo</TealCell>
              <TealCell>Und</TealCell>
              <TealCell>Coef.</TealCell>
              <TealCell>Qtde/Custo</TealCell>
              <TealCell>ValorUnit.</TealCell>
            </GridRow>
            <GridRow $h={4} $freeze>
              <RowHead />
              {HEADERS.map((c) => (
                <SpacerCell key={c} />
              ))}
            </GridRow>
            {ROWS.map((r) => (
              <SheetRow key={r.n} r={r} />
            ))}
          </Sheet>
          <VScroll>
            <ArrowUp />
            <VThumb />
            <VSpacer />
            <ArrowDown />
          </VScroll>
        </SheetArea>

        <TabBar>
          <TabNav>
            <NavLeft />
            <NavRight />
          </TabNav>
          <Tabs>
            {TABS.map((t) => (
              <Tab key={t.label} $w={t.w} $variant={t.variant}>{t.label}</Tab>
            ))}
          </Tabs>
          <TabMore>...</TabMore>
          <TabAdd>+</TabAdd>
          <TabDots>⋮</TabDots>
          <HScroll>
            <HArrowLeft />
            <HThumb />
            <HArrowRight />
          </HScroll>
        </TabBar>

        <StatusBar>
          <span>Pronto</span>
          <StatusItem $gap={21}><DocStatus /></StatusItem>
          <StatusItem $gap={17}><Accessibility />Acessibilidade: investigar</StatusItem>
          <StatusRight>
            <ViewBtn $on><ViewNormal /></ViewBtn>
            <ViewBtn><ViewLayout /></ViewBtn>
            <ViewBtn><ViewBreak /></ViewBtn>
            <StatusItem $gap={7}>−</StatusItem>
            <ZoomSlider />
            <span>+</span>
            <ZoomText>100%</ZoomText>
          </StatusRight>
        </StatusBar>

        <Taskbar>
          <StartBtn><WindowsLogo /></StartBtn>
          <TaskSearch>
            <MirrorSearch />
            Digite aqui para pesquisar
          </TaskSearch>
          <TaskIcon>
            <svg width="16" height="16" viewBox="0 0 16 16" fill="none" stroke="#fff" strokeWidth="2"><circle cx="8" cy="8" r="7" /></svg>
          </TaskIcon>
          <TaskIcon><TaskView /></TaskIcon>
          <AppIcons>
            <TaskIcon $open><Explorer /></TaskIcon>
            <TaskIcon $open><Chrome /></TaskIcon>
            <TaskIcon><DocFolder /></TaskIcon>
            <TaskIcon $open><Edge /></TaskIcon>
            <TaskIcon $open><AccessIcon s={24} /></TaskIcon>
            <TaskIcon $open $active><ExcelTask /></TaskIcon>
          </AppIcons>
          <Tray>
            <Moon />
            <TrayText $gap={10}>28°C</TrayText>
            <TrayText $gap={9}>Pred. limpo</TrayText>
            <TrayIcon $gap={18}>
              <svg width="11" height="7" viewBox="0 0 11 7" fill="none" stroke="#fff"><path d="M.5 6.500L5.500 1l5 5.500" /></svg>
            </TrayIcon>
            <TrayIcon $gap={12}><TrayCam /></TrayIcon>
            <TrayIcon $gap={6}><Cloud /></TrayIcon>
            <TrayIcon $gap={8}><Wifi /></TrayIcon>
            <TrayIcon $gap={6}><Speaker /></TrayIcon>
            <Clock>18:41<br />08/03/2022</Clock>
            <Notify>
              <NotifyIcon />
              <NotifyBadge>1</NotifyBadge>
            </Notify>
          </Tray>
        </Taskbar>
      </Page>
    </>
  );
}
